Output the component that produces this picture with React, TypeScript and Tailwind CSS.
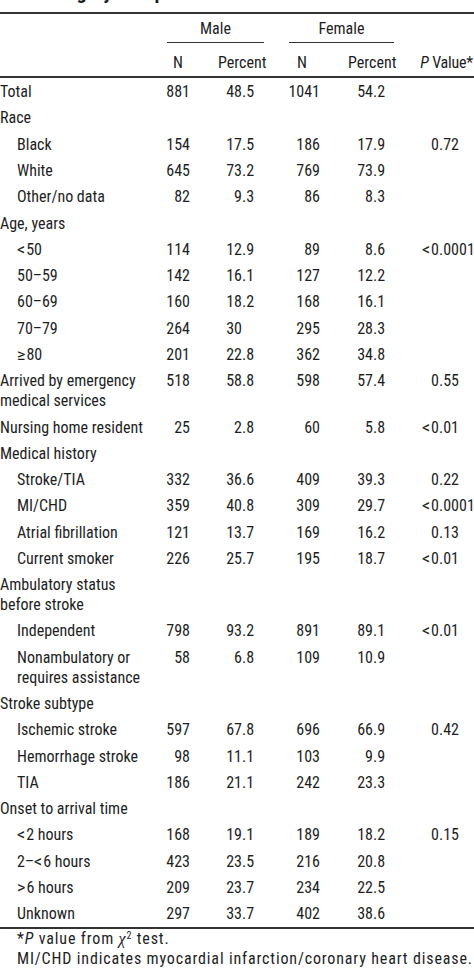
import React from 'react';

type Row = {
  label: React.ReactNode;
  indent?: boolean;
  vals?: string[];
};

const rows: Row[] = [
  { label: 'Total', vals: ['881', '48.5', '1041', '54.2', ''] },
  { label: 'Race' },
  { label: 'Black', indent: true, vals: ['154', '17.5', '186', '17.9', '0.72'] },
  { label: 'White', indent: true, vals: ['645', '73.2', '769', '73.9', ''] },
  { label: 'Other/no data', indent: true, vals: ['82', '9.3', '86', '8.3', ''] },
  { label: 'Age, years' },
  { label: '<50', indent: true, vals: ['114', '12.9', '89', '8.6', '<0.0001'] },
  { label: '50–59', indent: true, vals: ['142', '16.1', '127', '12.2', ''] },
  { label: '60–69', indent: true, vals: ['160', '18.2', '168', '16.1', ''] },
  { label: '70–79', indent: true, vals: ['264', '30', '295', '28.3', ''] },
  { label: '≥80', indent: true, vals: ['201', '22.8', '362', '34.8', ''] },
  {
    label: (
      <>
        Arrived by emergency
        <br />
        medical services
      </>
    ),
    vals: ['518', '58.8', '598', '57.4', '0.55'],
  },
  { label: 'Nursing home resident', vals: ['25', '2.8', '60', '5.8', '<0.01'] },
  { label: 'Medical history' },
  { label: 'Stroke/TIA', indent: true, vals: ['332', '36.6', '409', '39.3', '0.22'] },
  { label: 'MI/CHD', indent: true, vals: ['359', '40.8', '309', '29.7', '<0.0001'] },
  { label: 'Atrial fibrillation', indent: true, vals: ['121', '13.7', '169', '16.2', '0.13'] },
  { label: 'Current smoker', indent: true, vals: ['226', '25.7', '195', '18.7', '<0.01'] },
  {
    label: (
      <>
        Ambulatory status
        <br />
        before stroke
      </>
    ),
  },
  { label: 'Independent', indent: true, vals: ['798', '93.2', '891', '89.1', '<0.01'] },
  {
    label: (
      <>
        Nonambulatory or
        <br />
        requires assistance
      </>
    ),
    indent: true,
    vals: ['58', '6.8', '109', '10.9', ''],
  },
  { label: 'Stroke subtype' },
  { label: 'Ischemic stroke', indent: true, vals: ['597', '67.8', '696', '66.9', '0.42'] },
  { label: 'Hemorrhage stroke', indent: true, vals: ['98', '11.1', '103', '9.9', ''] },
  { label: 'TIA', indent: true, vals: ['186', '21.1', '242', '23.3', ''] },
  { label: 'Onset to arrival time' },
  { label: '<2 hours', indent: true, vals: ['168', '19.1', '189', '18.2', '0.15'] },
  { label: '2–<6 hours', indent: true, vals: ['423', '23.5', '216', '20.8', ''] },
  { label: '>6 hours', indent: true, vals: ['209', '23.7', '234', '22.5', ''] },
  { label: 'Unknown', indent: true, vals: ['297', '33.7', '402', '38.6', ''] },
];

// relation signs are set wider than the condensed digits
const withRel = (s: string) => {
  const m = s.match(/^(.*?)([<>≥])(.*)$/);
  if (!m) return s;
  return (
    <>
      {m[1]}
      <span className="mr-[1px] font-stretch-normal">{m[2]}</span>
      {m[3]}
    </>
  );
};

const Dec = ({ v, box }: { v: string; box: string }) => {
  if (!v) return null;
  const dot = v.indexOf('.');
  const int = dot < 0 ? v : v.slice(0, dot);
  const frac = dot < 0 ? '' : v.slice(dot);
  return (
    <div className="flex">
      <span className={`${box} shrink-0 text-right whitespace-nowrap`}>{withRel(int)}</span>
      <span>{frac}</span>
    </div>
  );
};

const cols = 'grid grid-cols-[160px_30px_72px_58px_75px_79px]';

export default function App() {
  return (
    <div className="w-[474px] bg-white font-['Roboto',sans-serif] font-stretch-condensed text-[16px] leading-[20px] text-[#1e1e1e]">
      {/* title line above, clipped */}
      <div className="h-[12px] overflow-hidden">
        <p className="mt-[-18px] pl-[40px] text-[20px] font-bold leading-[20px] whitespace-nowrap">
          Category Group
        </p>
      </div>

      <div className="border-t-2 border-[#333]">
        {/* header */}
        <div className={cols}>
          <div className="col-start-2 col-span-2">
            <div className="ml-[7px] mr-[-2px] border-b border-[#333] pt-[5px] pb-[3px] text-center">Male</div>
          </div>
          <div className="col-span-2">
            <div className="ml-[27px] mr-[1px] border-b border-[#333] pt-[5px] pb-[3px] text-center">Female</div>
          </div>
        </div>
        <div className={`${cols} border-b-2 border-[#333] pt-[10px] pb-[3px]`}>
          <div />
          <div className="pr-[7px] text-right">N</div>
          <div className="pl-[28px] whitespace-nowrap">Percent</div>
          <div className="pr-[13px] text-right">N</div>
          <div className="pl-[28px] whitespace-nowrap">Percent</div>
          <div className="pr-[1px] text-right whitespace-nowrap tracking-[-0.2px]">
            <i>P</i> Value*
          </div>
        </div>

        {/* body */}
        <div className="pt-[1px]">
          {rows.map((r, i) => (
            <div key={i} className={`${cols} py-[3.15px]`}>
              <div className={`whitespace-nowrap ${r.indent ? 'pl-[17px]' : ''}`}>
                {typeof r.label === 'string' ? withRel(r.label) : r.label}
              </div>
              {r.vals && (
                <>
                  <div className="text-right">{r.vals[0]}</div>
                  <Dec v={r.vals[1]} box="w-[52px]" />
                  <div className="text-right">{r.vals[2]}</div>
                  <Dec v={r.vals[3]} box="w-[53px]" />
                  <Dec v={r.vals[4]} box="w-[44px]" />
                </>
              )}
            </div>
          ))}
        </div>
      </div>

      {/* footnotes */}
      <div className="border-t-2 border-[#333] pl-[17px] text-[16px] leading-[20px] tracking-[0.85px]">
        <p>
          *<i>P</i> value from <i className="font-['Liberation_Serif',serif]">χ</i>
          <sup className="text-[10px]">2</sup> test.
        </p>
        <p className="whitespace-nowrap">MI/CHD indicates myocardial infarction/coronary heart disease.</p>
      </div>
    </div>
  );
}
